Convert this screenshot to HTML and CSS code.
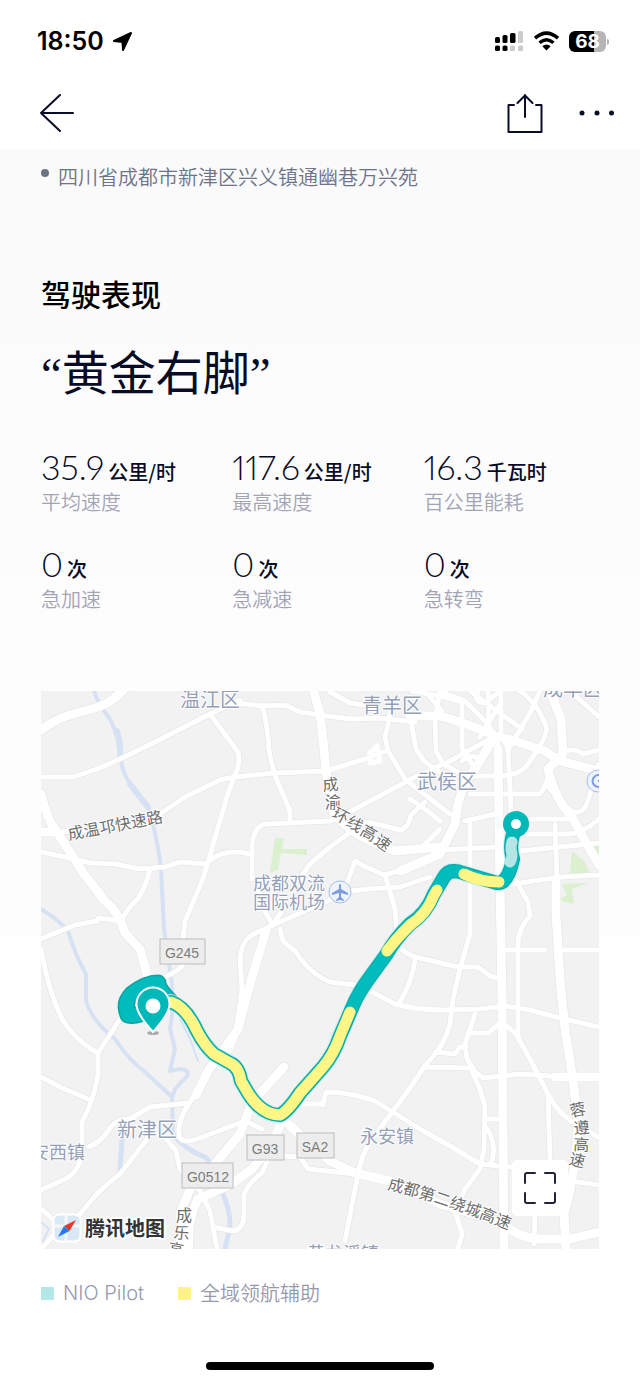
FILE: index.html
```html
<!DOCTYPE html>
<html lang="zh-CN">
<head>
<meta charset="utf-8">
<meta name="viewport" content="width=device-width, initial-scale=1">
<title>驾驶表现</title>
<link rel="stylesheet" href="styles.css">
</head>
<body>
<div class="status">
  <div class="status-left">
    <time class="clock">18:50</time>
    <svg width="21" height="21" viewBox="0 0 21 21" aria-hidden="true"><path d="M19 2 L11 19 L10.500 11 L2 10 Z" stroke="#000" stroke-width="2" stroke-linejoin="round"/></svg>
  </div>
  <div class="status-right">
    <svg width="30" height="22" viewBox="0 0 30 22" aria-hidden="true">
      <rect x="1" y="7" width="5" height="6" rx="1.6"/><rect x="8.500" y="5" width="5" height="8" rx="1.600"/><rect x="16" y="3" width="5.500" height="10" rx="1.600"/><rect x="24" y="1" width="5" height="12" rx="1.600" fill="#ccc"/>
      <rect x="1" y="15.500" width="5" height="5.500" rx="1.600"/><rect x="8.500" y="15.500" width="5" height="5.500" rx="1.600"/><rect x="16" y="15.500" width="5" height="5.500" rx="1.600" fill="#ccc"/><rect x="24" y="15.500" width="5" height="5.500" rx="1.600" fill="#ccc"/>
    </svg>
    <svg width="27" height="20" viewBox="0 0 27 20" aria-hidden="true">
      <path d="M2 7.200 Q13.500 -3 25 7.200" fill="none" stroke="#000" stroke-width="3.600"/>
      <path d="M6.500 11.800 Q13.500 5.600 20.500 11.800" fill="none" stroke="#000" stroke-width="3.400"/>
      <path d="M9.300 15.300 Q13.500 11.600 17.700 15.300 L13.500 19.500Z"/>
    </svg>
    <div class="battery"><span class="battery-level">68</span><i class="battery-cap"></i></div>
  </div>
</div>

<header class="nav">
  <button class="icon-btn" aria-label="返回">
    <svg width="36" height="38" viewBox="0 0 36 38"><path d="M21 1 L2 19 L21 37 M2 19 H34"/></svg>
  </button>
  <div class="nav-actions">
    <button class="icon-btn" aria-label="分享">
      <svg width="36" height="40" viewBox="0 0 36 40"><path d="M7 12 H1.500 V39 H34.500 V12 H29 M18 24 V2 M10.500 10 L18 2.500 L25.500 10"/></svg>
    </button>
    <button class="icon-btn" aria-label="更多">
      <svg width="36" height="6" viewBox="0 0 36 6"><g class="dots"><circle cx="3" cy="3" r="2.500"/><circle cx="18" cy="3" r="2.500"/><circle cx="32.500" cy="3" r="2.500"/></g></svg>
    </button>
  </div>
</header>

<main class="content">
  <p class="address">四川省成都市新津区兴义镇通幽巷万兴苑</p>
  <h1 class="title">驾驶表现</h1>
  <p class="headline">“黄金右脚”</p>
  <dl class="stats">
    <div class="stat"><dd><span class="num">35.9</span><span class="unit">公里/时</span></dd><dt>平均速度</dt></div>
    <div class="stat"><dd><span class="num">117.6</span><span class="unit">公里/时</span></dd><dt>最高速度</dt></div>
    <div class="stat"><dd><span class="num">16.3</span><span class="unit">千瓦时</span></dd><dt>百公里能耗</dt></div>
    <div class="stat"><dd><span class="num">0</span><span class="unit">次</span></dd><dt>急加速</dt></div>
    <div class="stat"><dd><span class="num">0</span><span class="unit">次</span></dd><dt>急减速</dt></div>
    <div class="stat"><dd><span class="num">0</span><span class="unit">次</span></dd><dt>急转弯</dt></div>
  </dl>

  <section class="map" aria-label="行程地图">
    <svg class="map-canvas" viewBox="41 692 558 558">
      <defs>
        <g id="minor">
          <path d="M41 778 H72 Q95 772 120 760 L155 743 L210 715 L240 701"/>
          <path d="M210 715 L230 742 L238 753 Q241 765 234 778 Q227 796 222 815 L203 880 L185 922 L183 940 V966 Q180 971 165 978"/>
          <path d="M60 833 L90 831 M160 815 L185 798 L220 781 Q230 778 275 774 L326 772 L365 760 L388 751"/>
          <path d="M262 707 Q267 722 269 750 Q272 772 282 793 L290 812 V823"/>
          <path d="M237 704 L262 707 L285 706 L300 713 L320 716 L350 720 L380 719 L415 723"/>
          <path d="M330 693 L350 704 L372 707 M390 712 L389 722 L385 738 L388 752 L405 780 L420 792 L450 815"/>
          <path d="M252 880 V845 Q255 825 268 825 L330 822 L355 810 L415 778 L450 762 L490 740"/>
          <path d="M300 880 L310 865 L330 848 L352 832 L366 823 L381 826 L400 831 Q408 830 411 816 L425 803"/>
          <path d="M257 880 L260 905 L273 926 L350 892 L368 890 L400 888 L430 878"/>
          <path d="M286 905 L273 926 L250 937 Q241 945 240 960 L242 990 L235 1040 L226 1060"/>
          <path d="M280 930 L283 942 L295 952 Q310 975 330 983 L355 986 L372 993 L395 1005 Q415 1011 445 1011 L480 1010 L505 1007 L530 1011 L560 1019 L599 1028"/>
          <path d="M345 890 L355 862 L366 868 L384 876 L420 866 M385 876 L395 910 L398 945 Q404 956 420 959 L458 968 L478 968 L490 977 L502 980 M415 960 Q413 980 400 1003"/>
          <path d="M470 885 V935 L460 970 L453 1000 L450 1025 Q445 1043 435 1055 L424 1068"/>
          <path d="M515 880 L528 903 L530 917 Q518 930 518 945 V1040"/>
          <path d="M475 1015 L468 1037 L465 1045 L467 1060 L473 1069 M468 1034 H488 L502 1023 L516 1035 L530 1060 L548 1095 Q560 1118 580 1127 L599 1139 M435 1053 L455 1055 L460 1048 L466 1048"/>
          <path d="M424 1068 L470 1069 L483 1079 L520 1075 L565 1078 M424 1068 L410 1089 L370 1143 Q362 1155 358 1175 L345 1242"/>
          <path d="M470 1068 L480 1090 L485 1108 L484 1150 L480 1170 L465 1190 L455 1212 L462 1235 L458 1250 M485 1120 H503 M486 1128 Q498 1145 491 1165"/>
          <path d="M323 1106 L326 1093 Q350 1093 375 1102 L425 1133 L450 1147 L480 1165 L520 1169 M548 1095 L550 1160 M570 1182 L599 1186 M535 1215 L534 1245"/>
          <path d="M41 1078 L60 1088 L88 1100 M88 1148 Q100 1144 108 1132 Q115 1120 130 1120 L150 1108 L188 1104"/>
          <path d="M155 1130 L120 1175 Q108 1184 95 1197 L80 1215 L55 1235 L41 1250 M41 1210 L55 1222"/>
          <path d="M198 1090 L190 1103 Q175 1125 180 1139 Q184 1145 200 1139 L245 1122 L262 1130 M165 1138 L176 1152 L180 1170 L200 1192 L210 1212 L217 1250"/>
          <path d="M213 1228 L233 1232 Q245 1230 244 1212 V1196 Q247 1185 262 1174 L270 1156 L300 1158 L308 1170 L355 1175 M297 1105 H323"/>
          <path d="M41 853 L65 858 L90 864 L115 865 L140 870 L165 868 L180 863 L205 865 L215 858 Q230 850 250 855 M150 870 Q147 885 138 900 Q130 906 122 920"/>
          <path d="M41 940 L75 926 L97 922 L99 919 L120 922 M41 950 Q50 1000 65 1025 Q80 1045 98 1054 L120 1020"/>
          <path d="M98 1054 V1075 Q94 1102 82 1123 V1155 Q78 1175 63 1181 L41 1191"/>
          <path d="M410 717 L416 750 L424 762 L445 777 L460 785 M440 692 L435 720 L436 752 L443 765 L465 777 H500 Q523 776 530 762 L540 748"/>
          <path d="M412 692 L440 697 L462 703 V750 L472 765 M440 692 L465 702 L485 722 L497 738 M425 692 L442 712 M470 692 L490 707 L522 730 M488 692 L489 735 L498 745 V880 M501 692 V735 L508 750 L512 830"/>
          <path d="M520 692 Q538 704 547 730 Q544 742 535 755 M540 692 L530 714 L508 751 M570 692 L599 718 M562 753 Q575 748 583 755 L599 751"/>
          <path d="M478 692 Q473 704 485 704 L500 692 M462 762 Q473 752 480 762 M500 705 L480 738"/>
          <path d="M470 795 H540 Q548 785 549 770 M546 785 L562 804 Q577 821 586 807 L595 780 L599 765 M530 820 H575 M465 822 L495 815 M410 800 L425 810 L440 822 M420 850 L440 830"/>
          <path d="M440 851 L500 848 M520 835 L570 835 Q585 833 599 820 M520 852 L599 844 M470 825 V872 M555 825 L557 880 M500 887 L560 878 L599 876 M505 951 H545 M560 951 H599"/>
        </g>
        <g id="major">
          <path d="M41 731 Q56 720 70 716 L95 709 Q112 704 124 690"/>
          <path d="M41 795 Q47 820 55 830 L84 875 L105 902 Q118 912 125 934 L140 950 L150 985 M41 833 H55"/>
          <path d="M313 690 L320 715 L323 740 L326 772 L334 815 Q348 832 370 842 L395 852 L440 848"/>
          <path d="M410 717 L440 717 Q470 725 495 737 L515 742 L545 752 L560 762 L599 772"/>
          <path d="M550 692 L561 720 L563 755 L548 770 Q555 800 570 815 L599 866"/>
          <path d="M495 737 L475 770 Q458 790 455 825 L440 855 L400 872"/>
          <path d="M498 750 L500 885 L502 1000 L504 1250"/>
          <path d="M556 880 V915 L560 980 Q563 1010 565 1030 L572 1075 L578 1120 Q577 1170 564 1215 L566 1250 M555 1078 H599"/>
          <path d="M266 932 L250 985 L238 1030 L208 1072 L196 1096"/>
          <path d="M284 1068 L252 1103 L240 1135 L215 1165 L190 1190 L180 1215 V1250 M282 1122 Q274 1145 252 1170 L230 1186 L198 1200 Q187 1220 189 1250"/>
          <path d="M280 1118 L330 1162 L355 1174 L390 1182 L440 1205 L500 1223 Q520 1240 540 1240 H570 L599 1233"/>
        </g>
        <path id="route" d="M516 828 Q508 845 513 860 Q508 885 497 884 L463 874 Q449 869 444 878 L434 895 Q426 915 410 925 Q395 940 386 956 L370 978 Q358 994 352 1009 L340 1037 Q334 1055 323 1068 L300 1094 Q288 1112 280 1116 Q262 1116 248 1094 L241 1082 Q239 1068 230 1064 L214 1055 Q205 1047 197 1032 Q186 1008 171 1003"/>
        <path id="label-west" d="M69 841 L180 820"/>
        <path id="label-south" d="M387 1190 Q455 1207 530 1240"/>
      </defs>
      <rect class="land" x="41" y="692" width="558" height="558"/>
      <g class="water">
        <path d="M94 692 Q98 705 110 720 Q119 737 121 762 Q125 785 148 808 Q158 840 161 870 L164 930 L172 985 L173 1010 L170 1030 L175 1050 L170 1072 Q188 1067 188 1076 L175 1090 L172 1098" stroke-width="4"/>
        <path d="M117 732 Q121 745 120 757 M130 785 L148 808" stroke-width="6"/>
        <path d="M41 910 Q58 920 68 932 Q76 958 86 975 V1002 Q92 1022 115 1040 Q128 1060 145 1073 L172 1098 L173 1135" stroke-width="4"/>
        <path d="M173 1135 Q185 1151 205 1158 L220 1173 M221 1190 Q233 1217 229 1232 L225 1250 M122 1140 L120 1170" stroke-width="5"/>
        <path d="M180 1020 L190 1040 L198 1062 M41 1223 L49 1230 L43 1242" stroke-width="2"/>
      </g>
      <path class="park" d="M275 839 L284 839 L282 850 L307 850 V856 L281 854 L278 871 L270 874 Z M572 852 L584 862 L590 874 H570Z M590 850 L599 845 V866Z M562 885 L588 884 L572 890 L574 905 L558 901 L567 896Z"/>
      <use href="#minor" class="road minor-edge"/><use href="#major" class="road major-edge"/>
      <use href="#minor" class="road minor-fill"/><use href="#major" class="road major-fill"/>
      <path d="M370 754 L377 747 L380 762 L370 764Z" class="road minor-fill"/>

      <path class="loop-edge" d="M171 1003 Q158 990 158 984 Q146 984 132 995 Q123 1004 128 1016 Q137 1018 151 1010"/>
      <path class="loop-fill" d="M171 1003 Q158 990 158 984 Q146 984 132 995 Q123 1004 128 1016 Q137 1018 151 1010"/>
      <use href="#route" class="route-glow"/><use href="#route" class="route-edge"/><use href="#route" class="route-fill"/>
      <g class="pilot"><path d="M512 843 Q510 849 512 855 Q512 860 510 863" stroke="#b3e6e5"/></g>
      <g class="pilot" stroke="#fff685">
        <path d="M464 875 Q480 883 499 883"/>
        <path d="M437 891 L434 896 Q426 916 410 926 Q396 940 387 952"/>
        <path d="M350 1013 L340 1037 Q334 1055 323 1068 L300 1094 Q288 1112 280 1116 Q262 1116 248 1094 L241 1082 Q239 1068 230 1064 L214 1055 Q205 1047 197 1032 Q186 1008 171 1003"/>
      </g>
      <circle cx="516" cy="825" r="13" fill="#00b8b8"/><circle cx="516" cy="825" r="5" fill="#fff"/>
      <ellipse cx="153" cy="1034" rx="6" ry="2" fill="#aaa"/>
      <path class="pin" d="M153 1033 Q136 1014 136.500 1005 A16.500 16.500 0 1 1 169.500 1005 Q170 1014 153 1033Z"/><circle cx="153" cy="1007" r="7.500" fill="#fff"/>

      <g class="place">
        <text x="180" y="708">温江区</text><text x="362" y="714">青羊区</text><text x="417" y="790">武侯区</text>
        <text x="543" y="697">成华区</text><text x="117" y="1138">新津区</text>
        <g class="small"><text x="307" y="1261">黄龙溪镇</text><text x="31" y="1160">安西镇</text><text x="360" y="1144">永安镇</text><text x="253" y="891">成都双流</text><text x="253" y="910">国际机场</text></g>
      </g>
      <g class="highway">
        <text><textPath href="#label-west">成温邛快速路</textPath></text>
        <text><textPath href="#label-south">成都第二绕城高速</textPath></text>
        <text x="323 325 331 345 359 373" y="792 809 818 826 835 844" rotate="-5 0 28 30 30 35">成渝环线高速</text>
        <text x="176 173 167" y="1222 1239 1255" rotate="0 5 10">成乐高</text>
        <text x="571 574 573 568" y="1118 1135 1151 1165" rotate="-12 -4 4 14">蓉遵高速</text>
      </g>
      <g class="shield"><rect x="160" y="940" width="45" height="25"/><text x="182" y="959">G245</text>
        <rect x="247" y="1136" width="37" height="25"/><text x="265" y="1155">G93</text>
        <rect x="297" y="1134" width="37" height="25"/><text x="315" y="1153">SA2</text>
        <rect x="182" y="1164" width="51" height="25"/><text x="208" y="1183">G0512</text></g>
      <circle class="poi" cx="340" cy="893" r="11"/><path fill="#7d9de0" d="M339 886 Q340 884 341 886 V890 L348 894 V896 L341 894 V898 L344 901 V902 L340 901 L336 902 V901 L339 898 V894 L332 896 V894 L339 890Z"/>
      <circle class="poi" cx="598" cy="782" r="11"/><path d="M603 778 A6 6 0 1 0 603 786 M598 782 H603" fill="none" stroke="#7d9de0" stroke-width="2"/>
      <g><rect x="53.500" y="1215.500" width="27" height="27" rx="6" fill="#d8e8f5" stroke="#fff" stroke-width="2"/><path d="M66 1216 V1242 M54 1227 H81" stroke="#f2f8fb" stroke-width="3"/><path d="M76 1221 L69.500 1232 L64 1227Z" fill="#f5352a"/><path d="M58 1238 L64 1227 L69.500 1232Z" fill="#2479f4"/></g>
      <text class="brand" x="85" y="1237">腾讯地图</text>
    </svg>
    <button class="expand" aria-label="全屏地图"><svg width="32" height="32" viewBox="0 0 32 32"><path d="M1 11 V3 Q1 1 3 1 H11 M21 1 H29 Q31 1 31 3 V11 M31 21 V29 Q31 31 29 31 H21 M11 31 H3 Q1 31 1 29 V21"/></svg></button>
  </section>

  <ul class="legend"><li class="legend-nio">NIO Pilot</li><li class="legend-nop">全域领航辅助</li></ul>
</main>
<div class="home-indicator"></div>
</body>
</html>
```
FILE: styles.css
```css
* { box-sizing: border-box; }
body {
  margin: 0;
  background: #fff;
  color: #070b26;
  font-family: "Noto Sans CJK SC", sans-serif;
}
p, h1, dl, dd, ul { margin: 0; padding: 0; }
button { border: 0; padding: 0; background: none; cursor: pointer; }
svg { display: block; }

.status {
  display: flex;
  justify-content: space-between;
  align-items: center;
  height: 82px;
  padding: 0 31px 0 37px;
}
.status-left { display: flex; align-items: center; gap: 8px; }
.clock { font: 600 25px/30px Inter, sans-serif; color: #000; }
.status-right { display: flex; align-items: center; gap: 9px; }
.battery {
  position: relative;
  width: 37px;
  height: 21px;
  margin-right: 3px;
  border-radius: 6px;
  background: linear-gradient(90deg, #000 68%, #b5b5b5 68%);
}
.battery-level {
  display: block;
  color: #fff;
  font: 700 19px/21px Inter, sans-serif;
  text-align: center;
}
.battery-cap {
  position: absolute;
  left: 38px;
  top: 8px;
  width: 2px;
  height: 6px;
  border-radius: 0 2px 2px 0;
  background: #b5b5b5;
}

.nav {
  display: flex;
  justify-content: space-between;
  align-items: center;
  height: 67px;
  padding: 0 25px 6px 39px;
}
.nav-actions { display: flex; align-items: center; gap: 36px; }
.icon-btn path { fill: none; stroke: #090d28; stroke-width: 2; stroke-linecap: round; stroke-linejoin: round; }
.dots { fill: #090d28; }

.content {
  padding: 13px 41px 0;
  background: linear-gradient(#fafafb, #fdfdfe 500px, #fdfdfe 600px, #fff 1000px);
}
.address {
  display: flex;
  align-items: center;
  gap: 9px;
  color: #6f7389;
  font-size: 20px;
  font-weight: 350;
  line-height: 30px;
}
.address::before {
  content: "";
  width: 8px;
  height: 8px;
  margin-bottom: 8px;
  border-radius: 50%;
  background: #6b7483;
}
.title { margin-top: 79px; color: #000; font-size: 30px; font-weight: 500; line-height: 44px; }
.headline {
  margin-top: 25px;
  font-family: "Liberation Serif", "Noto Sans CJK SC", sans-serif;
  font-size: 47px;
  font-weight: 400;
  line-height: 68px;
}

.stats {
  display: grid;
  grid-template-columns: repeat(3, 1fr);
  gap: 29px 16px;
  margin-top: 40px;
}
.stat { display: flex; flex-direction: column; gap: 3px; }
.stat dd { display: flex; align-items: baseline; gap: 4px; height: 37px; white-space: nowrap; }
.num { font: 300 34px/38px Lato, sans-serif; font-variant-numeric: proportional-nums; }
.unit { font-size: 20px; font-weight: 500; line-height: 36px; }
.stat dt { color: #a2a4b6; font-size: 20px; font-weight: 350; line-height: 28px; }

.map { position: relative; margin-top: 78px; overflow: hidden; }
.map-canvas { width: 100%; height: auto; }
.land { fill: #f2f2f3; }
.water { fill: none; stroke: #d6e2f3; stroke-linecap: round; stroke-linejoin: round; }
.park { fill: #daf0cf; }
.road { fill: none; stroke-linejoin: round; stroke-linecap: round; }
.minor-edge { stroke: #e2e2e3; stroke-width: 6; }
.minor-fill { stroke: #fff; stroke-width: 5; }
.major-edge { stroke: #e2e2e3; stroke-width: 10; }
.major-fill { stroke: #fff; stroke-width: 9; }
.loop-edge, .loop-fill, .route-glow, .route-edge, .route-fill, .pilot { fill: none; stroke-linecap: round; stroke-linejoin: round; }
.loop-edge { stroke: #0ba3a0; stroke-width: 17; }
.loop-fill { stroke: #00bcbc; stroke-width: 14; }
.route-glow { stroke: #c4eeee; stroke-width: 16; }
.route-edge { stroke: #0ba3a0; stroke-width: 14; }
.route-fill { stroke: #00bcbc; stroke-width: 12; }
.pilot { stroke-width: 11; }
.pin { fill: #00b8b8; stroke: #fff; stroke-width: 2; }
.map-canvas text { paint-order: stroke; stroke: #fff; stroke-width: 2px; stroke-linejoin: round; }
.place { fill: #949fb7; font-size: 20px; }
.place .small { font-size: 18px; }
.highway { fill: #6d6d6d; font-size: 16px; }
.shield rect { fill: #ededed; stroke: #bcbcbc; }
.map-canvas .shield text { fill: #7d7d7d; stroke: none; font: 14px "Liberation Sans", sans-serif; text-anchor: middle; }
.poi { fill: #edf4ff; stroke: #a5bee9; }
.map-canvas .brand { fill: #333; font-size: 20px; font-weight: 700; stroke-width: 4px; }
.expand {
  position: absolute;
  right: 31px;
  bottom: 33px;
  display: grid;
  place-items: center;
  width: 56px;
  height: 56px;
  border-radius: 5px;
  background: #fff;
}
.expand path { fill: none; stroke: #20243a; stroke-width: 2; stroke-linecap: round; }

.legend {
  display: flex;
  gap: 34px;
  padding: 29px 0 0;
  list-style: none;
  color: #9799ad;
  font-size: 20px;
  font-weight: 350;
  line-height: 30px;
}
.legend li { display: flex; align-items: center; gap: 9px; }
.legend li::before { content: ""; width: 13px; height: 13px; background: #b3e8e6; }
.legend .legend-nio { font-family: Inter, sans-serif; }
.legend .legend-nop::before { background: #fff384; }
.home-indicator {
  width: 228px;
  height: 8px;
  margin: 54px auto 14px;
  border-radius: 4px;
  background: #000;
}
```
